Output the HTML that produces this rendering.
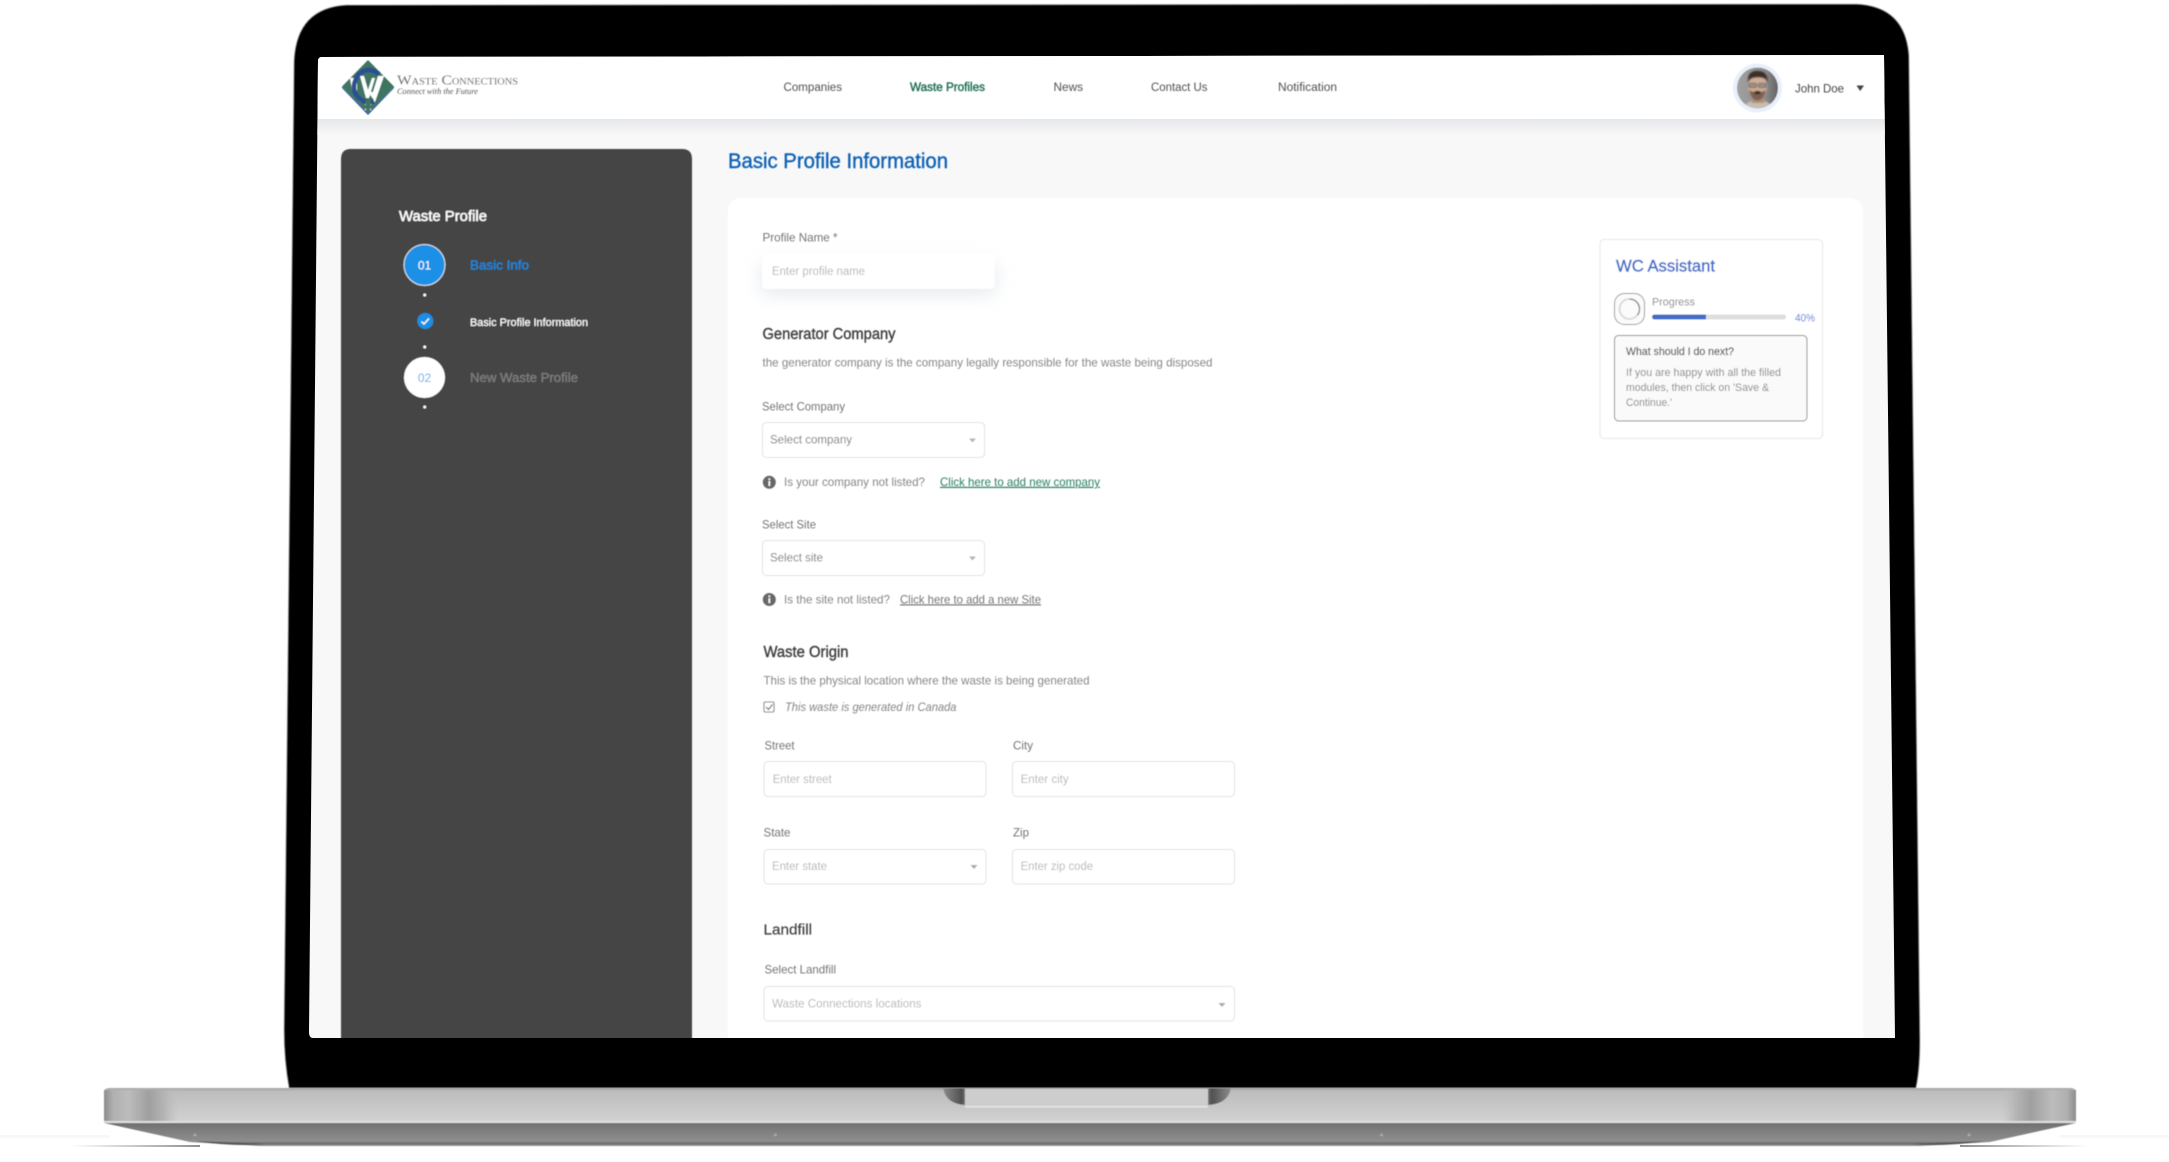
<!DOCTYPE html>
<html lang="en"><head><meta charset="utf-8"><title>Basic Profile Information</title>
<style>
html,body{margin:0;padding:0;background:#fff;width:2169px;height:1162px;overflow:hidden}
svg{display:block}
text{font-family:"Liberation Sans",sans-serif;white-space:pre}
.m{stroke:currentColor;stroke-width:.4px}
.lab{font-size:12px;fill:#747474}
.ph{font-size:11.5px;fill:#b8b8b8}
.h{font-size:15.5px;fill:#404040;stroke:#404040;stroke-width:.4px}
.d{font-size:12px;fill:#868686}
.nav{font-size:11.5px;fill:#505050}
</style></head><body>
<svg xmlns="http://www.w3.org/2000/svg" width="2169" height="1162" viewBox="0 0 2169 1162">
<defs>
<linearGradient id="top" x1="0" y1="0" x2="0" y2="1"><stop offset="0" stop-color="#a4a4a4"/><stop offset=".1" stop-color="#bdbdbd"/><stop offset=".85" stop-color="#cfcfcf"/><stop offset="1" stop-color="#d4d4d4"/></linearGradient>
<linearGradient id="low" x1="0" y1="0" x2="0" y2="1"><stop offset="0" stop-color="#6f6f6f"/><stop offset=".35" stop-color="#7f7f7f"/><stop offset=".8" stop-color="#8f8f8f"/><stop offset=".88" stop-color="#6d6d6d"/><stop offset=".95" stop-color="#7f7f7f"/><stop offset="1" stop-color="#a5a5a5"/></linearGradient>
<linearGradient id="endL" x1="0" y1="0" x2="1" y2="0"><stop offset="0" stop-color="#8c8c8c"/><stop offset=".12" stop-color="#b0b0b0"/><stop offset=".32" stop-color="#bcbcbc"/><stop offset=".6" stop-color="#a0a0a0"/><stop offset=".8" stop-color="#b4b4b4"/><stop offset="1" stop-color="#c0c0c0" stop-opacity="0"/></linearGradient>
<linearGradient id="endR" x1="1" y1="0" x2="0" y2="0"><stop offset="0" stop-color="#8c8c8c"/><stop offset=".12" stop-color="#b0b0b0"/><stop offset=".32" stop-color="#bcbcbc"/><stop offset=".6" stop-color="#a0a0a0"/><stop offset=".8" stop-color="#b4b4b4"/><stop offset="1" stop-color="#c0c0c0" stop-opacity="0"/></linearGradient>
<linearGradient id="nL" x1="0" y1="0" x2="1" y2="0"><stop offset="0" stop-color="#8c8c8c"/><stop offset=".85" stop-color="#505050"/><stop offset="1" stop-color="#777"/></linearGradient>
<linearGradient id="nR" x1="1" y1="0" x2="0" y2="0"><stop offset="0" stop-color="#8c8c8c"/><stop offset=".85" stop-color="#505050"/><stop offset="1" stop-color="#777"/></linearGradient>
<linearGradient id="shL" x1="0" y1="0" x2="1" y2="0"><stop offset="0" stop-color="#fff"/><stop offset="1" stop-color="#8f8f8f"/></linearGradient>
<linearGradient id="shR" x1="1" y1="0" x2="0" y2="0"><stop offset="0" stop-color="#fff"/><stop offset="1" stop-color="#8f8f8f"/></linearGradient>
<linearGradient id="navsh" x1="0" y1="0" x2="0" y2="1"><stop offset="0" stop-color="#e6e7ea"/><stop offset="1" stop-color="#f8f8f9"/></linearGradient>
<linearGradient id="bgav" x1="0" y1="0" x2="1" y2="0"><stop offset="0" stop-color="#a2a2a2"/><stop offset=".65" stop-color="#8c8c8c"/><stop offset="1" stop-color="#5a5a5a"/></linearGradient>
<clipPath id="scr"><path d="M322 57L1884 55L1895 1038L313 1038Q309 1038 309 1032L318 61Q318 57 322 57Z"/></clipPath>
<clipPath id="av"><circle cx="1757.5" cy="88" r="20.5"/></clipPath>
<filter id="b" x="-2%" y="-2%" width="104%" height="104%"><feGaussianBlur stdDeviation=".45"/></filter>
<filter id="b2" x="-20%" y="-20%" width="140%" height="140%"><feGaussianBlur stdDeviation=".7"/></filter>
<filter id="bs" x="-30%" y="-80%" width="160%" height="260%"><feGaussianBlur stdDeviation="9"/></filter>
</defs>

<!-- base shadows -->
<rect x="70" y="1145" width="130" height="2" fill="url(#shL)"/>
<rect x="1960" y="1145" width="128" height="2" fill="url(#shR)"/>
<rect x="0" y="1135" width="110" height="3" fill="#f8f8f8"/>
<rect x="2060" y="1135" width="109" height="3" fill="#f8f8f8"/>

<!-- laptop base -->
<g filter="url(#b)">
<path d="M104 1123L190 1142L260 1146L1920 1146L1990 1142L2076 1123Z" fill="url(#low)"/>
<path d="M196 1141Q232 1147 266 1144L196 1141Z" fill="#555"/>
<path d="M1984 1141Q1945 1147 1912 1144L1984 1141Z" fill="#555"/>
<path d="M109 1088L2071 1088Q2076 1088 2076 1093L2076 1123L104 1123L104 1093Q104 1088 109 1088Z" fill="url(#top)"/>
<rect x="104" y="1090" width="75" height="32" fill="url(#endL)"/>
<rect x="2001" y="1090" width="75" height="32" fill="url(#endR)"/>
<rect x="104" y="1121" width="1972" height="2" fill="#dfdfdf"/>
<path d="M943 1088Q946 1104 965 1105L965 1088Z" fill="url(#nL)"/>
<path d="M1231 1088Q1228 1104 1208 1105L1208 1088Z" fill="url(#nR)"/>
<rect x="965" y="1089" width="243" height="17" fill="#cdcdcd"/>
<rect x="965" y="1106" width="243" height="1.500" fill="#e6e6e6"/>
<path d="M195 1133l2 3h-4zM775.500 1133l2 3h-4zM1381.500 1133l2 3h-4zM1969 1133l2 3h-4z" fill="#aeaeae"/>
</g>

<!-- laptop lid -->
<path d="M346 5L1856 4Q1905 6 1909 55L1920 1040Q1920 1070 1916 1088L289 1088Q284 1060 284 1030L294 60Q297 8 346 5Z" fill="#000" stroke="#a8a8a8" stroke-width=".8" stroke-opacity=".6" filter="url(#b)"/>

<!-- screen -->
<g clip-path="url(#scr)">
<rect x="300" y="50" width="1610" height="995" fill="#f8f8f9"/>
<rect x="300" y="119" width="1610" height="16" fill="url(#navsh)"/>
<rect x="300" y="50" width="1610" height="69" fill="#fff"/>

<g filter="url(#b)">
<!-- logo -->
<g>
<polygon points="342,88 368,115 394,88 394,86.500 368,113 342,86.500" fill="#2f5597"/>
<polygon points="368,60 394,86.500 368,113 342,86.500" fill="#3d7560"/>
<path d="M350 78L357 78L357 96L363 101L365 101L365 110L371 110L371 101L374 100L368 92L373 92L378 76L384 76L375 102L360 102L352 90Z" fill="#fff"/>
<path d="M360 76L364 76L368 90L372 78L375 78L369 98L366 98Z" fill="#fff"/>
<path d="M379 74Q368 66 359 74Q350 86 357 96Q365 105 374 101" fill="none" stroke="#2b4f94" stroke-width="4.500"/>
<polygon points="368,112 362.500,105 365.500,105 365.500,100 370.500,100 370.500,105 373.500,105" fill="#3d7560"/>
<text x="397" y="84.500" textLength="121" lengthAdjust="spacingAndGlyphs" style="font-family:'Liberation Serif',serif;font-size:13.500px;font-variant:small-caps;fill:#777">Waste Connections</text>
<text x="397" y="94" textLength="81" lengthAdjust="spacingAndGlyphs" style="font-family:'Liberation Serif',serif;font-size:8.500px;font-style:italic;fill:#555">Connect with the Future</text>
</g>

<!-- nav -->
<text class="nav" x="783.500" y="91" textLength="58.500" lengthAdjust="spacingAndGlyphs">Companies</text>
<text class="nav m" x="910" y="91" textLength="75" lengthAdjust="spacingAndGlyphs" style="fill:#1f6e52;color:#1f6e52">Waste Profiles</text>
<text class="nav" x="1053.500" y="91" textLength="29.500" lengthAdjust="spacingAndGlyphs">News</text>
<text class="nav" x="1151" y="91" textLength="56.500" lengthAdjust="spacingAndGlyphs">Contact Us</text>
<text class="nav" x="1278" y="91" textLength="59" lengthAdjust="spacingAndGlyphs">Notification</text>

<!-- user -->
<circle cx="1757.500" cy="88" r="24.500" fill="#e8f0fc"/>
<g clip-path="url(#av)" filter="url(#b2)">
<rect x="1735" y="66" width="46" height="44" fill="url(#bgav)"/>
<path d="M1742 110Q1745 103 1752 101L1764 101Q1771 103 1774 110Z" fill="#c9bdb3"/>
<rect x="1752" y="92" width="12" height="11" fill="#ad8e79"/>
<ellipse cx="1757.500" cy="86.500" rx="9.500" ry="13.500" fill="#d0ad97"/>
<path d="M1748 83Q1746 71 1757 70.500Q1769 70.500 1767.500 83Q1766 77 1758 77.500Q1750 77 1748 83Z" fill="#3e2f27"/>
<path d="M1749 90Q1751 100 1757.500 100.500Q1764 100 1766 90Q1762 92.500 1757.500 92Q1753 92.500 1749 90Z" fill="#7d604f"/>
<ellipse cx="1757.500" cy="92.500" rx="3.500" ry="1.800" fill="#33211e"/>
<rect x="1749" y="83.500" width="7.500" height="4" rx="1" fill="#9c948e" stroke="#4f4743" stroke-width=".7"/>
<rect x="1758.500" y="83.500" width="7.500" height="4" rx="1" fill="#9c948e" stroke="#4f4743" stroke-width=".7"/>
</g>
<text x="1795" y="92.300" textLength="49" lengthAdjust="spacingAndGlyphs" style="font-size:12px;fill:#454545">John Doe</text>
<polygon points="1856.500,85.500 1864,85.500 1860.200,91" fill="#444"/>

<!-- sidebar -->
<path d="M351 149L682 149Q692 149 692 159L692 1045L341 1045L341 159Q341 149 351 149Z" fill="#444444"/>
<text class="m" x="399" y="221" textLength="88" lengthAdjust="spacingAndGlyphs" style="font-size:15px;fill:#fff;color:#fff">Waste Profile</text>
<circle cx="424.500" cy="265" r="20.500" fill="#1b90e6" stroke="#dfe4e8" stroke-width="1"/>
<text x="424.500" y="269.300" text-anchor="middle" style="font-size:12px;fill:#fff">01</text>
<text class="m" x="470" y="269.500" textLength="59" lengthAdjust="spacingAndGlyphs" style="font-size:13px;fill:#1c86d9;color:#1c86d9">Basic Info</text>
<circle cx="424.700" cy="295" r="1.500" fill="#fff"/>
<circle cx="425.300" cy="321" r="8" fill="#1b8ee3"/>
<path d="M421.500 321.500L424 324L429 318.500" fill="none" stroke="#fff" stroke-width="1.400"/>
<text x="470" y="326" textLength="118" lengthAdjust="spacingAndGlyphs" style="font-size:11px;fill:#fff;stroke:#fff;stroke-width:.15px">Basic Profile Information</text>
<circle cx="424.700" cy="347" r="1.500" fill="#fff"/>
<circle cx="424.500" cy="377.500" r="20.500" fill="#fff"/>
<text x="424.500" y="381.800" text-anchor="middle" style="font-size:12px;fill:#5aabea">02</text>
<text class="m" x="470" y="382" textLength="108" lengthAdjust="spacingAndGlyphs" style="font-size:13px;fill:#7b7b7b;color:#7b7b7b">New Waste Profile</text>
<circle cx="424.700" cy="407" r="1.500" fill="#fff"/>

<!-- title + card -->
<text class="m" x="728" y="168.200" textLength="220" lengthAdjust="spacingAndGlyphs" style="font-size:21px;fill:#0f62b5;color:#0f62b5">Basic Profile Information</text>
<path d="M742 198L1849 198Q1863 198 1863 212L1863 1045L728 1045L728 212Q728 198 742 198Z" fill="#fff"/>
</g>

<!-- profile input -->
<rect x="762" y="262" width="233" height="32" rx="4" fill="#cfd6e0" opacity=".55" filter="url(#bs)"/>
<g filter="url(#b)">
<rect x="762" y="253" width="233" height="36" rx="4" fill="#fff"/>
<text class="lab" x="762.500" y="241.500" textLength="75" lengthAdjust="spacingAndGlyphs">Profile Name *</text>
<text class="ph" x="772" y="275" textLength="93" lengthAdjust="spacingAndGlyphs">Enter profile name</text>

<text class="h" x="762.500" y="339" textLength="133" lengthAdjust="spacingAndGlyphs">Generator Company</text>
<text class="d" x="762.500" y="366.500" textLength="450" lengthAdjust="spacingAndGlyphs">the generator company is the company legally responsible for the waste being disposed</text>

<text class="lab" x="762" y="410.500" textLength="83" lengthAdjust="spacingAndGlyphs">Select Company</text>
<rect x="762.500" y="422.500" width="222" height="35" rx="4" fill="#fff" stroke="#e1e1e1"/>
<text x="770" y="443.700" textLength="82" lengthAdjust="spacingAndGlyphs" style="font-size:12px;fill:#7a7a7a">Select company</text>
<polygon points="969,438.500 976,438.500 972.500,442.500" fill="#b3b3b3"/>
<circle cx="769.300" cy="482.300" r="6.500" fill="#676767"/>
<rect x="768.500" y="481" width="1.700" height="5" fill="#fff"/><rect x="768.500" y="478.300" width="1.700" height="1.700" fill="#fff"/>
<text class="d" x="784" y="485.800" textLength="141" lengthAdjust="spacingAndGlyphs">Is your company not listed?</text>
<text x="940" y="485.800" textLength="160" lengthAdjust="spacingAndGlyphs" text-decoration="underline" style="font-size:12px;fill:#2a7d5f">Click here to add new company</text>

<text class="lab" x="762" y="528.500" textLength="54" lengthAdjust="spacingAndGlyphs">Select Site</text>
<rect x="762.500" y="540.500" width="222" height="35" rx="4" fill="#fff" stroke="#e1e1e1"/>
<text x="770" y="561.700" textLength="53" lengthAdjust="spacingAndGlyphs" style="font-size:12px;fill:#7a7a7a">Select site</text>
<polygon points="969,556.500 976,556.500 972.500,560.500" fill="#b3b3b3"/>
<circle cx="769.300" cy="599.500" r="6.500" fill="#676767"/>
<rect x="768.500" y="598.200" width="1.700" height="5" fill="#fff"/><rect x="768.500" y="595.500" width="1.700" height="1.700" fill="#fff"/>
<text class="d" x="784" y="603.300" textLength="106" lengthAdjust="spacingAndGlyphs">Is the site not listed?</text>
<text x="900" y="603.300" textLength="141" lengthAdjust="spacingAndGlyphs" text-decoration="underline" style="font-size:12px;fill:#757575">Click here to add a new Site</text>

<text class="h" x="763.500" y="657" textLength="85" lengthAdjust="spacingAndGlyphs">Waste Origin</text>
<text class="d" x="763.500" y="684.300" textLength="326" lengthAdjust="spacingAndGlyphs">This is the physical location where the waste is being generated</text>
<rect x="764" y="702" width="10" height="10" rx="1.500" fill="#fff" stroke="#8a8a8a" stroke-width="1.100"/>
<path d="M766 707L768.500 709.500L772.500 704.500" fill="none" stroke="#666" stroke-width="1.200"/>
<text x="785" y="711.200" textLength="171.500" lengthAdjust="spacingAndGlyphs" style="font-size:12px;font-style:italic;fill:#858585">This waste is generated in Canada</text>

<text class="lab" x="764.500" y="749.500" textLength="30" lengthAdjust="spacingAndGlyphs">Street</text>
<text class="lab" x="1013" y="749.500" textLength="20" lengthAdjust="spacingAndGlyphs">City</text>
<rect x="764" y="761.500" width="222" height="35" rx="4" fill="#fff" stroke="#e1e1e1"/>
<rect x="1012.500" y="761.500" width="222" height="35" rx="4" fill="#fff" stroke="#e1e1e1"/>
<text class="ph" x="772.700" y="783.200" textLength="59" lengthAdjust="spacingAndGlyphs">Enter street</text>
<text class="ph" x="1020.600" y="783.200" textLength="48" lengthAdjust="spacingAndGlyphs">Enter city</text>

<text class="lab" x="763.500" y="836.700" textLength="27" lengthAdjust="spacingAndGlyphs">State</text>
<text class="lab" x="1013" y="836.700" textLength="16" lengthAdjust="spacingAndGlyphs">Zip</text>
<rect x="764" y="849.500" width="222" height="34.500" rx="4" fill="#fff" stroke="#e1e1e1"/>
<rect x="1012.500" y="849.500" width="222" height="34.500" rx="4" fill="#fff" stroke="#e1e1e1"/>
<text class="ph" x="772" y="870.200" textLength="55" lengthAdjust="spacingAndGlyphs">Enter state</text>
<polygon points="970.500,865 977.500,865 974,869" fill="#a8a8a8"/>
<text class="ph" x="1020.600" y="870.200" textLength="72.500" lengthAdjust="spacingAndGlyphs">Enter zip code</text>

<text x="763.500" y="934.500" textLength="48.500" lengthAdjust="spacingAndGlyphs" style="font-size:15px;fill:#404040;stroke:#404040;stroke-width:.2px">Landfill</text>
<text class="lab" x="764.500" y="973.700" textLength="71.500" lengthAdjust="spacingAndGlyphs">Select Landfill</text>
<rect x="764" y="986.500" width="470.500" height="34.500" rx="4" fill="#fff" stroke="#e1e1e1"/>
<text class="ph" x="772" y="1007.700" textLength="149.500" lengthAdjust="spacingAndGlyphs">Waste Connections locations</text>
<polygon points="1218.500,1003 1225.500,1003 1222,1007" fill="#a8a8a8"/>

<!-- assistant -->
<rect x="1600" y="239.500" width="222.500" height="199" rx="4" fill="#fff" stroke="#e6e6e6"/>
<text class="m" x="1616" y="271.300" textLength="99" lengthAdjust="spacingAndGlyphs" style="font-size:16.500px;fill:#3f6cca;color:#3f6cca">WC Assistant</text>
<rect x="1614.500" y="293.500" width="30" height="31" rx="10" fill="#fbfbfb" stroke="#9a9a9a"/>
<circle cx="1629.500" cy="309" r="10" fill="none" stroke="#dcdcdc" stroke-width="2"/>
<path d="M1629.500 299A10 10 0 0 1 1637.500 315" fill="none" stroke="#777" stroke-width="1.100"/>
<text x="1652" y="305.500" textLength="43" lengthAdjust="spacingAndGlyphs" style="font-size:11px;fill:#858585">Progress</text>
<rect x="1652" y="314.500" width="134" height="5" rx="2.500" fill="#dedede"/>
<path d="M1654.500 314.500L1706 314.500L1706 319.500L1654.500 319.500A2.500 2.500 0 0 1 1654.500 314.500Z" fill="#3f6cca"/>
<text x="1795" y="321.300" textLength="20" lengthAdjust="spacingAndGlyphs" style="font-size:11px;fill:#4a77d4">40%</text>
<rect x="1614.500" y="335.500" width="192.500" height="85.500" rx="4" fill="#fafafa" stroke="#8a8a8a"/>
<text class="m" x="1626" y="355" textLength="108" lengthAdjust="spacingAndGlyphs" style="font-size:11px;fill:#505050;color:#505050;stroke-width:.15px">What should I do next?</text>
<text x="1626" y="376" textLength="155" lengthAdjust="spacingAndGlyphs" style="font-size:11px;fill:#868686">If you are happy with all the filled</text>
<text x="1626" y="391" textLength="143" lengthAdjust="spacingAndGlyphs" style="font-size:11px;fill:#868686">modules, then click on 'Save &amp;</text>
<text x="1626" y="406" textLength="46" lengthAdjust="spacingAndGlyphs" style="font-size:11px;fill:#868686">Continue.'</text>
</g>
</g>
</svg>
</body></html>
